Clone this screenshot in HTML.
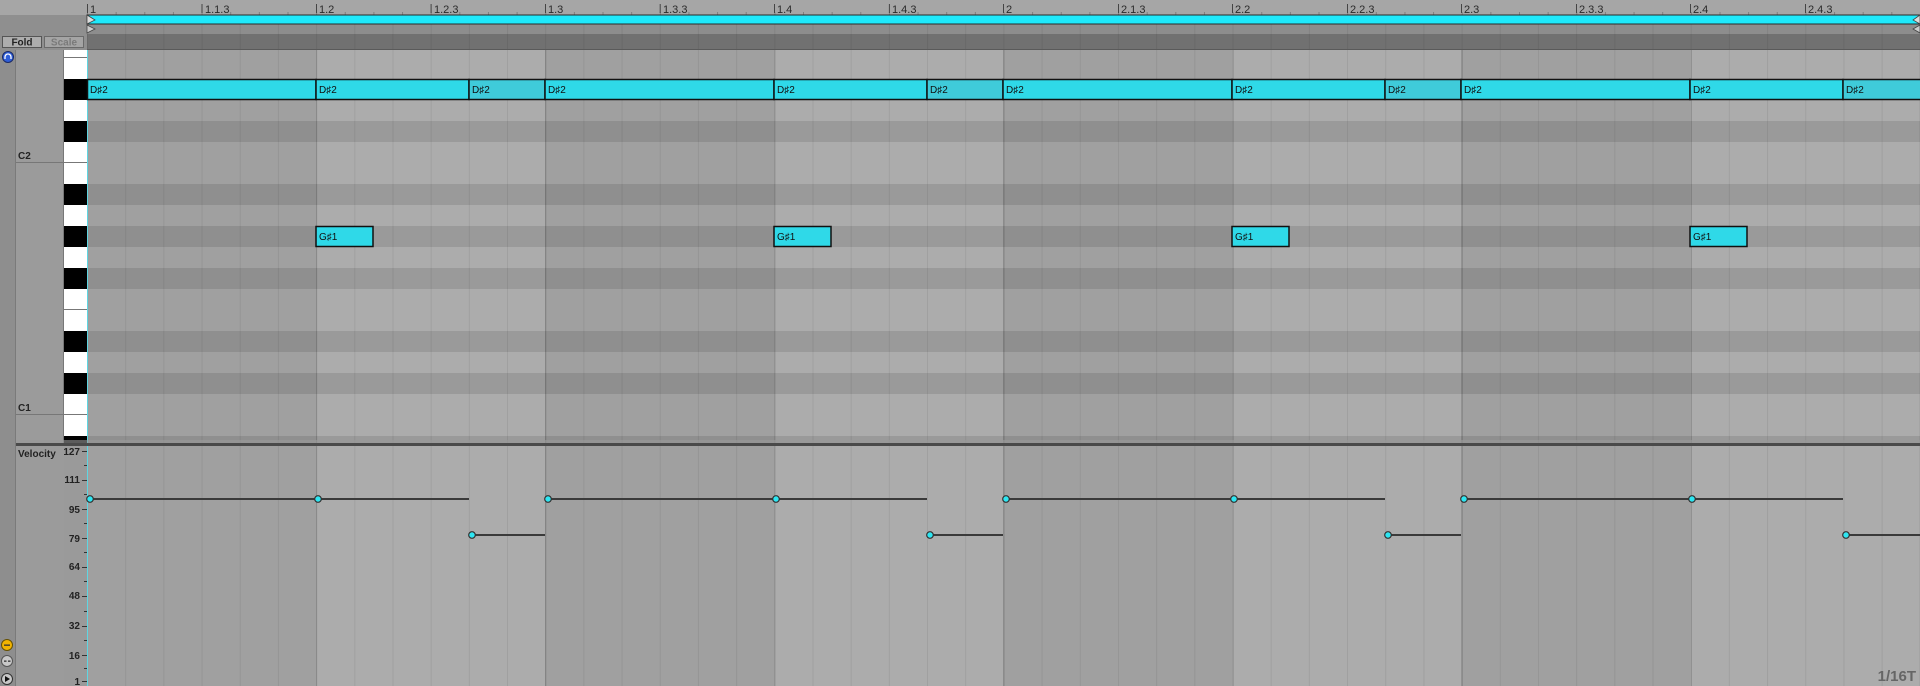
<!DOCTYPE html>
<html><head><meta charset="utf-8"><style>
html,body{margin:0;padding:0;background:#9a9a9a;width:1920px;height:686px;overflow:hidden}
svg{display:block}
text{font-family:"Liberation Sans",sans-serif}
</style></head><body>
<svg width="1920" height="686" viewBox="0 0 1920 686" xmlns="http://www.w3.org/2000/svg">
<defs>
<pattern id="g16" patternUnits="userSpaceOnUse" x="87" y="0" width="38.183" height="10"><rect x="0" y="0" width="1" height="10" fill="#000" fill-opacity="0.07"/></pattern>
<pattern id="gb" patternUnits="userSpaceOnUse" x="87" y="0" width="229.1" height="10"><rect x="0" y="0" width="1" height="10" fill="#000" fill-opacity="0.16"/></pattern>
<pattern id="rt" patternUnits="userSpaceOnUse" x="87" y="0" width="28.64" height="10"><rect x="0" y="0" width="1" height="10" fill="#555"/></pattern>
</defs>
<!-- left strip -->
<rect x="0" y="0" width="16" height="686" fill="#8e8e8e"/>
<rect x="15" y="50" width="1" height="636" fill="#7a7a7a"/>
<rect x="16" y="50" width="48" height="636" fill="#9b9b9b"/>
<!-- top header -->
<rect x="0" y="0" width="1920" height="15" fill="#a6a6a6"/>
<rect x="0" y="15" width="87" height="35" fill="#8f8f8f"/>
<rect x="87" y="24" width="1833" height="10" fill="#8d8d8d"/>
<rect x="87" y="34" width="1833" height="16" fill="#717171"/>
<rect x="87" y="24" width="1833" height="26" fill="url(#g16)"/>
<rect x="87" y="49" width="1833" height="1" fill="#5a5a5a"/>
<!-- ruler ticks -->
<rect x="87" y="12" width="1833" height="3" fill="url(#rt)" opacity="0.5"/>
<g font-size="11" fill="#2a2a2a">
<g fill="#444">
<rect x="87" y="4" width="1" height="9"/><rect x="201.5" y="4" width="1" height="9"/><rect x="316" y="4" width="1" height="9"/><rect x="430.6" y="4" width="1" height="9"/><rect x="545" y="4" width="1" height="9"/><rect x="659.7" y="4" width="1" height="9"/><rect x="774" y="4" width="1" height="9"/><rect x="888.9" y="4" width="1" height="9"/><rect x="1003" y="4" width="1" height="9"/><rect x="1118" y="4" width="1" height="9"/><rect x="1232" y="4" width="1" height="9"/><rect x="1347" y="4" width="1" height="9"/><rect x="1461" y="4" width="1" height="9"/><rect x="1576" y="4" width="1" height="9"/><rect x="1690" y="4" width="1" height="9"/><rect x="1805" y="4" width="1" height="9"/>
</g>
<text x="90" y="13">1</text><text x="205" y="13">1.1.3</text><text x="319" y="13">1.2</text><text x="434" y="13">1.2.3</text><text x="548" y="13">1.3</text><text x="663" y="13">1.3.3</text><text x="777" y="13">1.4</text><text x="892" y="13">1.4.3</text><text x="1006" y="13">2</text><text x="1121" y="13">2.1.3</text><text x="1235" y="13">2.2</text><text x="1350" y="13">2.2.3</text><text x="1464" y="13">2.3</text><text x="1579" y="13">2.3.3</text><text x="1693" y="13">2.4</text><text x="1808" y="13">2.4.3</text>
</g>
<!-- loop bar -->
<rect x="87" y="15" width="1833" height="9" fill="#1fe9fb" stroke="#2a2a2a" stroke-width="1"/>
<polygon points="87,15 95,20 87,24" fill="#ddd" stroke="#444" stroke-width="0.8"/>
<polygon points="87,25 95,29 87,33" fill="#ccc" stroke="#444" stroke-width="0.8"/>
<polygon points="1920,15 1913,20 1920,24" fill="#ddd" stroke="#444" stroke-width="0.8"/>
<polygon points="1920,25 1913,29 1920,33" fill="#ccc" stroke="#444" stroke-width="0.8"/>
<!-- buttons -->
<rect x="2.5" y="36.5" width="39" height="11" fill="#adadad" stroke="#555"/>
<text x="22" y="45.5" font-size="10" font-weight="bold" fill="#222" text-anchor="middle">Fold</text>
<rect x="44.5" y="36.5" width="39" height="11" fill="#a4a4a4" stroke="#6a6a6a"/>
<text x="64" y="45.5" font-size="10" font-weight="bold" fill="#7a7a7a" text-anchor="middle">Scale</text>
<!-- grid background -->
<rect x="87" y="50" width="1833" height="393" fill="#acacac"/>
<rect x="87" y="446" width="1833" height="240" fill="#acacac"/>
<g fill="#a0a0a0">
<rect x="87" y="50" width="229" height="393"/><rect x="545" y="50" width="229" height="393"/><rect x="1003" y="50" width="229" height="393"/><rect x="1461" y="50" width="229" height="393"/>
<rect x="87" y="446" width="229" height="240"/><rect x="545" y="446" width="229" height="240"/><rect x="1003" y="446" width="229" height="240"/><rect x="1461" y="446" width="229" height="240"/>
</g>
<g fill="#000" fill-opacity="0.1">
<rect x="87" y="79" width="1833" height="21"/><rect x="87" y="121" width="1833" height="21"/><rect x="87" y="184" width="1833" height="21"/><rect x="87" y="226" width="1833" height="21"/><rect x="87" y="268" width="1833" height="21"/><rect x="87" y="331" width="1833" height="21"/><rect x="87" y="373" width="1833" height="21"/><rect x="87" y="436" width="1833" height="7"/>
</g>
<rect x="87" y="50" width="1833" height="393" fill="url(#g16)"/>
<rect x="87" y="50" width="1833" height="393" fill="url(#gb)"/>
<rect x="87" y="446" width="1833" height="240" fill="url(#g16)"/>
<rect x="87" y="446" width="1833" height="240" fill="url(#gb)"/>
<!-- keys -->
<rect x="64" y="50" width="23" height="393" fill="#fff"/>
<g fill="#000">
<rect x="64" y="79" width="23" height="21"/><rect x="64" y="121" width="23" height="21"/><rect x="64" y="184" width="23" height="21"/><rect x="64" y="226" width="23" height="21"/><rect x="64" y="268" width="23" height="21"/><rect x="64" y="331" width="23" height="21"/><rect x="64" y="373" width="23" height="21"/><rect x="64" y="436" width="23" height="7"/>
</g>
<g fill="#777">
<rect x="64" y="57" width="23" height="1"/><rect x="16" y="162" width="71" height="1"/><rect x="64" y="309" width="23" height="1"/><rect x="16" y="414" width="71" height="1"/>
</g>
<rect x="63" y="50" width="1" height="393" fill="#777"/>
<text x="18" y="159" font-size="10" font-weight="bold" fill="#222">C2</text>
<text x="18" y="411" font-size="10" font-weight="bold" fill="#222">C1</text>
<rect x="87" y="50" width="1" height="636" fill="#5fd6e2"/>
<!-- separator -->
<rect x="16" y="440" width="1904" height="3" fill="#9a9a9a" opacity="0.6"/>
<rect x="16" y="443" width="1904" height="3" fill="#4a4a4a"/>
<!-- notes -->
<g stroke="#111" stroke-width="1.5" font-size="10" font-weight="bold">
<rect x="87.5" y="79.5" width="228.5" height="20" fill="#2fd9e8"/>
<rect x="316" y="79.5" width="153" height="20" fill="#2fd9e8"/>
<rect x="469" y="79.5" width="76" height="20" fill="#3fcbda"/>
<rect x="545" y="79.5" width="229" height="20" fill="#2fd9e8"/>
<rect x="774" y="79.5" width="153" height="20" fill="#2fd9e8"/>
<rect x="927" y="79.5" width="76" height="20" fill="#3fcbda"/>
<rect x="1003" y="79.5" width="229" height="20" fill="#2fd9e8"/>
<rect x="1232" y="79.5" width="153" height="20" fill="#2fd9e8"/>
<rect x="1385" y="79.5" width="76" height="20" fill="#3fcbda"/>
<rect x="1461" y="79.5" width="229" height="20" fill="#2fd9e8"/>
<rect x="1690" y="79.5" width="153" height="20" fill="#2fd9e8"/>
<rect x="1843" y="79.5" width="78" height="20" fill="#3fcbda"/>
<rect x="316" y="226.5" width="57" height="20" fill="#2fd9e8"/>
<rect x="774" y="226.5" width="57" height="20" fill="#2fd9e8"/>
<rect x="1232" y="226.5" width="57" height="20" fill="#2fd9e8"/>
<rect x="1690" y="226.5" width="57" height="20" fill="#2fd9e8"/>
</g>
<g font-size="10" fill="#111">
<text x="90" y="93">D♯2</text><text x="319" y="93">D♯2</text><text x="472" y="93">D♯2</text><text x="548" y="93">D♯2</text><text x="777" y="93">D♯2</text><text x="930" y="93">D♯2</text><text x="1006" y="93">D♯2</text><text x="1235" y="93">D♯2</text><text x="1388" y="93">D♯2</text><text x="1464" y="93">D♯2</text><text x="1693" y="93">D♯2</text><text x="1846" y="93">D♯2</text>
<text x="319" y="240">G♯1</text><text x="777" y="240">G♯1</text><text x="1235" y="240">G♯1</text><text x="1693" y="240">G♯1</text>
</g>
<!-- velocity axis -->
<text x="18" y="457" font-size="10" font-weight="bold" fill="#222">Velocity</text>
<g font-size="10" font-weight="bold" fill="#222" text-anchor="end">
<text x="80" y="455">127</text><text x="80" y="483">111</text><text x="80" y="513">95</text><text x="80" y="542">79</text><text x="80" y="570">64</text><text x="80" y="599">48</text><text x="80" y="629">32</text><text x="80" y="659">16</text><text x="80" y="685">1</text>
</g>
<g fill="#333">
<rect x="82" y="451" width="5" height="1"/><rect x="82" y="480" width="5" height="1"/><rect x="82" y="509" width="5" height="1"/><rect x="82" y="538" width="5" height="1"/><rect x="82" y="567" width="5" height="1"/><rect x="82" y="596" width="5" height="1"/><rect x="82" y="626" width="5" height="1"/><rect x="82" y="655" width="5" height="1"/><rect x="82" y="681" width="5" height="1"/>
<rect x="84" y="465" width="3" height="1"/><rect x="84" y="494" width="3" height="1"/><rect x="84" y="523" width="3" height="1"/><rect x="84" y="552" width="3" height="1"/><rect x="84" y="581" width="3" height="1"/><rect x="84" y="611" width="3" height="1"/><rect x="84" y="640" width="3" height="1"/><rect x="84" y="668" width="3" height="1"/>
</g>
<!-- velocity lines -->
<g stroke="#3a3a3a" stroke-width="2">
<line x1="87" y1="499" x2="469" y2="499"/><line x1="545" y1="499" x2="927" y2="499"/><line x1="1003" y1="499" x2="1385" y2="499"/><line x1="1461" y1="499" x2="1843" y2="499"/>
<line x1="469" y1="535" x2="545" y2="535"/><line x1="927" y1="535" x2="1003" y2="535"/><line x1="1385" y1="535" x2="1461" y2="535"/><line x1="1843" y1="535" x2="1920" y2="535"/>
</g>
<g fill="#2ee6f2" stroke="#333" stroke-width="1.2">
<circle cx="90" cy="499" r="3.3"/><circle cx="318" cy="499" r="3.3"/><circle cx="548" cy="499" r="3.3"/><circle cx="776" cy="499" r="3.3"/><circle cx="1006" cy="499" r="3.3"/><circle cx="1234" cy="499" r="3.3"/><circle cx="1464" cy="499" r="3.3"/><circle cx="1692" cy="499" r="3.3"/>
<circle cx="472" cy="535" r="3.3"/><circle cx="930" cy="535" r="3.3"/><circle cx="1388" cy="535" r="3.3"/><circle cx="1846" cy="535" r="3.3"/>
</g>
<text x="1916" y="681" font-size="15" font-weight="bold" fill="#666" text-anchor="end">1/16T</text>
<!-- left icons -->
<circle cx="8" cy="57" r="5.5" fill="#2f5ed8" stroke="#1a2a66"/>
<path d="M5 59 v-2 a3 3 0 0 1 6 0 v2" fill="none" stroke="#fff" stroke-width="1.3"/>
<circle cx="7" cy="645" r="5.5" fill="#f2b400" stroke="#665000"/>
<rect x="4" y="644.5" width="6" height="1.3" fill="#333"/>
<circle cx="7" cy="661" r="5.5" fill="#c8c8c8" stroke="#555"/>
<rect x="4" y="660.5" width="2.5" height="1.3" fill="#333"/><rect x="8" y="660.5" width="2.5" height="1.3" fill="#333"/>
<circle cx="7" cy="679" r="5.5" fill="#c8c8c8" stroke="#333"/>
<polygon points="5,676 10,679 5,682" fill="#111"/>
</svg>
</body></html>
